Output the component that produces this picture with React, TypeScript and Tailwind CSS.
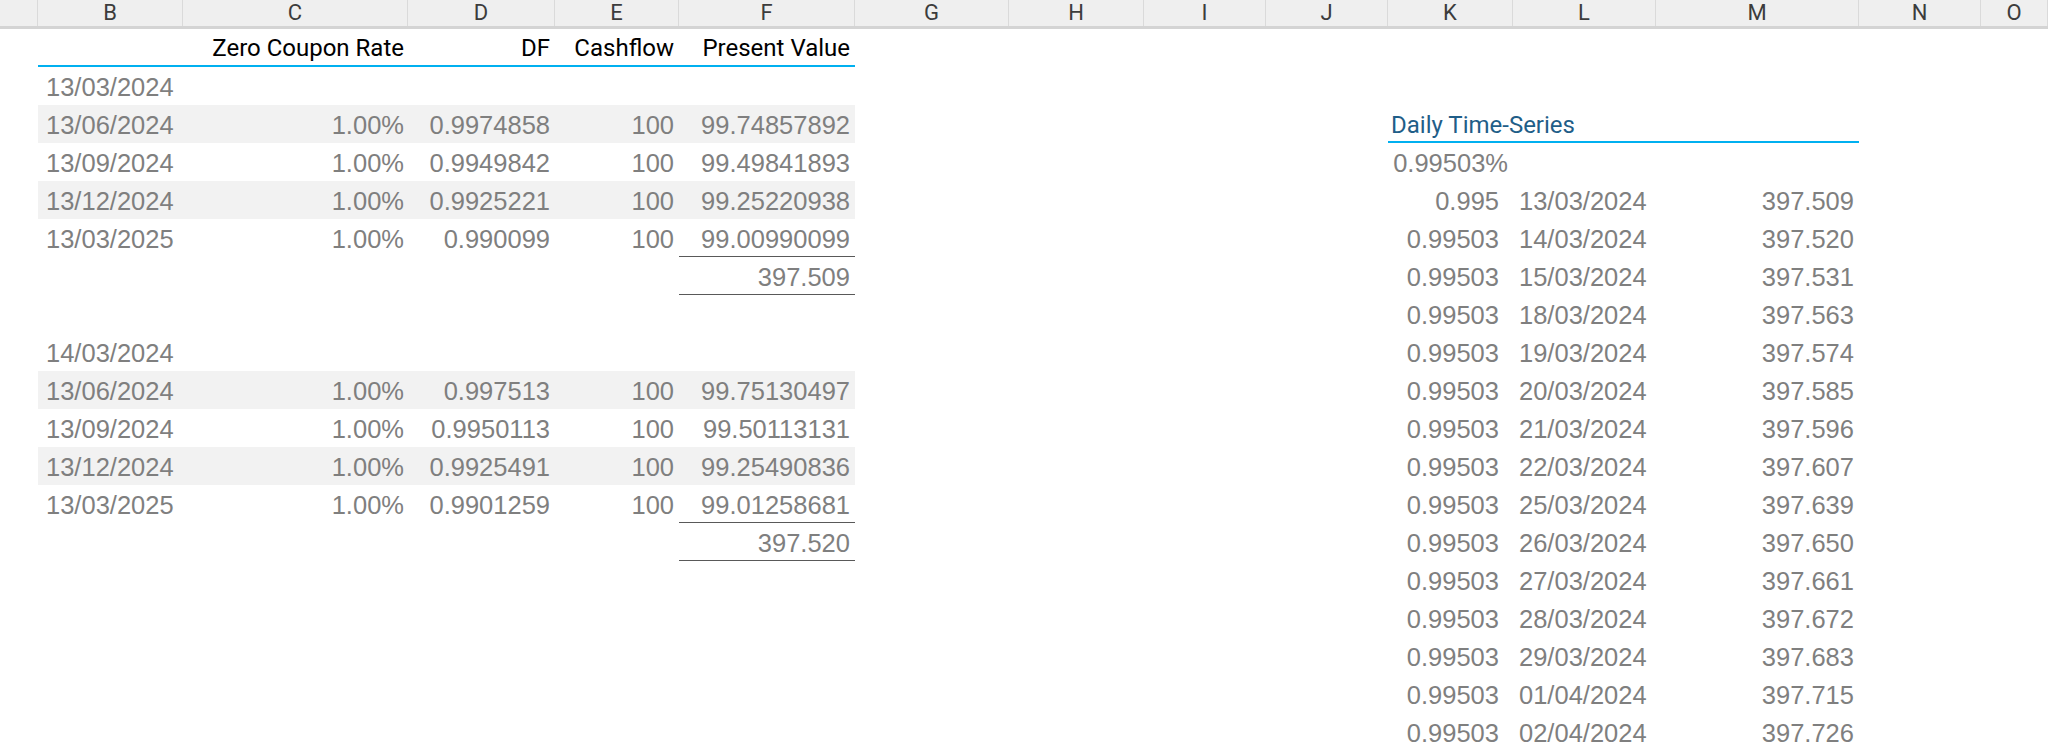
const COLS =
  "grid grid-cols-[38px_145px_225px_147px_124px_176px_154px_135px_122px_122px_125px_143px_203px_122px_1fr]";

const LETTERS = ["", "B", "C", "D", "E", "F", "G", "H", "I", "J", "K", "L", "M", "N", "O"];

type Left = {
  b?: string;
  c?: string;
  d?: string;
  e?: string;
  f?: string;
  stripe?: boolean;
  fLine?: boolean;
  head?: boolean;
};

type Right = { k?: string; l?: string; m?: string; title?: boolean; pct?: boolean };

const left: Left[] = [
  { c: "Zero Coupon Rate", d: "DF", e: "Cashflow", f: "Present Value", head: true },
  { b: "13/03/2024" },
  { b: "13/06/2024", c: "1.00%", d: "0.9974858", e: "100", f: "99.74857892", stripe: true },
  { b: "13/09/2024", c: "1.00%", d: "0.9949842", e: "100", f: "99.49841893" },
  { b: "13/12/2024", c: "1.00%", d: "0.9925221", e: "100", f: "99.25220938", stripe: true },
  { b: "13/03/2025", c: "1.00%", d: "0.990099", e: "100", f: "99.00990099", fLine: true },
  { f: "397.509", fLine: true },
  {},
  { b: "14/03/2024" },
  { b: "13/06/2024", c: "1.00%", d: "0.997513", e: "100", f: "99.75130497", stripe: true },
  { b: "13/09/2024", c: "1.00%", d: "0.9950113", e: "100", f: "99.50113131" },
  { b: "13/12/2024", c: "1.00%", d: "0.9925491", e: "100", f: "99.25490836", stripe: true },
  { b: "13/03/2025", c: "1.00%", d: "0.9901259", e: "100", f: "99.01258681", fLine: true },
  { f: "397.520", fLine: true },
  {},
  {},
  {},
  {},
  {},
];

const series: [string, string][] = [
  ["13/03/2024", "397.509"],
  ["14/03/2024", "397.520"],
  ["15/03/2024", "397.531"],
  ["18/03/2024", "397.563"],
  ["19/03/2024", "397.574"],
  ["20/03/2024", "397.585"],
  ["21/03/2024", "397.596"],
  ["22/03/2024", "397.607"],
  ["25/03/2024", "397.639"],
  ["26/03/2024", "397.650"],
  ["27/03/2024", "397.661"],
  ["28/03/2024", "397.672"],
  ["29/03/2024", "397.683"],
  ["01/04/2024", "397.715"],
  ["02/04/2024", "397.726"],
];

const right: Right[] = [
  {},
  {},
  { k: "Daily Time-Series", title: true },
  { k: "0.99503%", pct: true },
  ...series.map(([l, m], i) => ({ k: i === 0 ? "0.995" : "0.99503", l, m })),
];

const data = "h-[38px] pt-[2px] leading-[36px] whitespace-nowrap text-[25.5px] text-[#7f7f7f] font-['Liberation_Sans',Arial,sans-serif]";
const head = "h-[38px] leading-[38px] whitespace-nowrap text-[24px] text-black font-['Roboto','Liberation_Sans',sans-serif]";

function Row({ l, r }: { l: Left; r: Right }) {
  const base = l.head ? head : data;
  const bg = l.stripe ? "bg-[#f2f2f2]" : "";
  const line = l.head ? "border-b-2 border-[#00b0f0]" : "";
  return (
    <div className={COLS}>
      <div className="h-[38px]" />
      <div className={`${base} ${bg} ${line} pl-[8px]`}>{l.b}</div>
      <div className={`${base} ${bg} ${line} text-right pr-[4px]`}>{l.c}</div>
      <div className={`${base} ${bg} ${line} text-right pr-[5px]`}>{l.d}</div>
      <div className={`${base} ${bg} ${line} text-right pr-[5px]`}>{l.e}</div>
      <div className={`${base} ${bg} ${line} text-right pr-[5px] ${l.fLine ? "border-b border-[#595959]" : ""}`}>{l.f}</div>
      <div className="h-[38px]" />
      <div className="h-[38px]" />
      <div className="h-[38px]" />
      <div className="h-[38px]" />
      {r.title ? (
        <div className="col-span-3 h-[38px] pt-[2px] leading-[36px] whitespace-nowrap text-[24px] text-[#1f5e88] font-['Roboto','Liberation_Sans',sans-serif] pl-[3px] border-b-2 border-[#00b0f0]">
          {r.k}
        </div>
      ) : (
        <>
          <div className={`${data} text-right ${r.pct ? "pr-[5px]" : "pr-[14px]"}`}>{r.k}</div>
          <div className={`${data} pl-[6px]`}>{r.l}</div>
          <div className={`${data} text-right pr-[5px]`}>{r.m}</div>
        </>
      )}
      <div className="h-[38px]" />
      <div className="h-[38px]" />
    </div>
  );
}

export default function App() {
  return (
    <div className="w-[2048px] h-[756px] overflow-hidden bg-white">
      {/* column header strip */}
      <div className={`${COLS} h-[29px] bg-[#efefef] border-b-[3px] border-[#d4d4d4]`}>
        {LETTERS.map((c, i) => (
          <div
            key={i}
            className="h-[26px] border-r border-[#dadada] text-center text-[22px] leading-[26px] text-[#3c3c3c] font-['Roboto','Liberation_Sans',sans-serif]"
          >
            {c}
          </div>
        ))}
      </div>

      {left.map((l, i) => (
        <Row key={i} l={l} r={right[i] ?? {}} />
      ))}
    </div>
  );
}
